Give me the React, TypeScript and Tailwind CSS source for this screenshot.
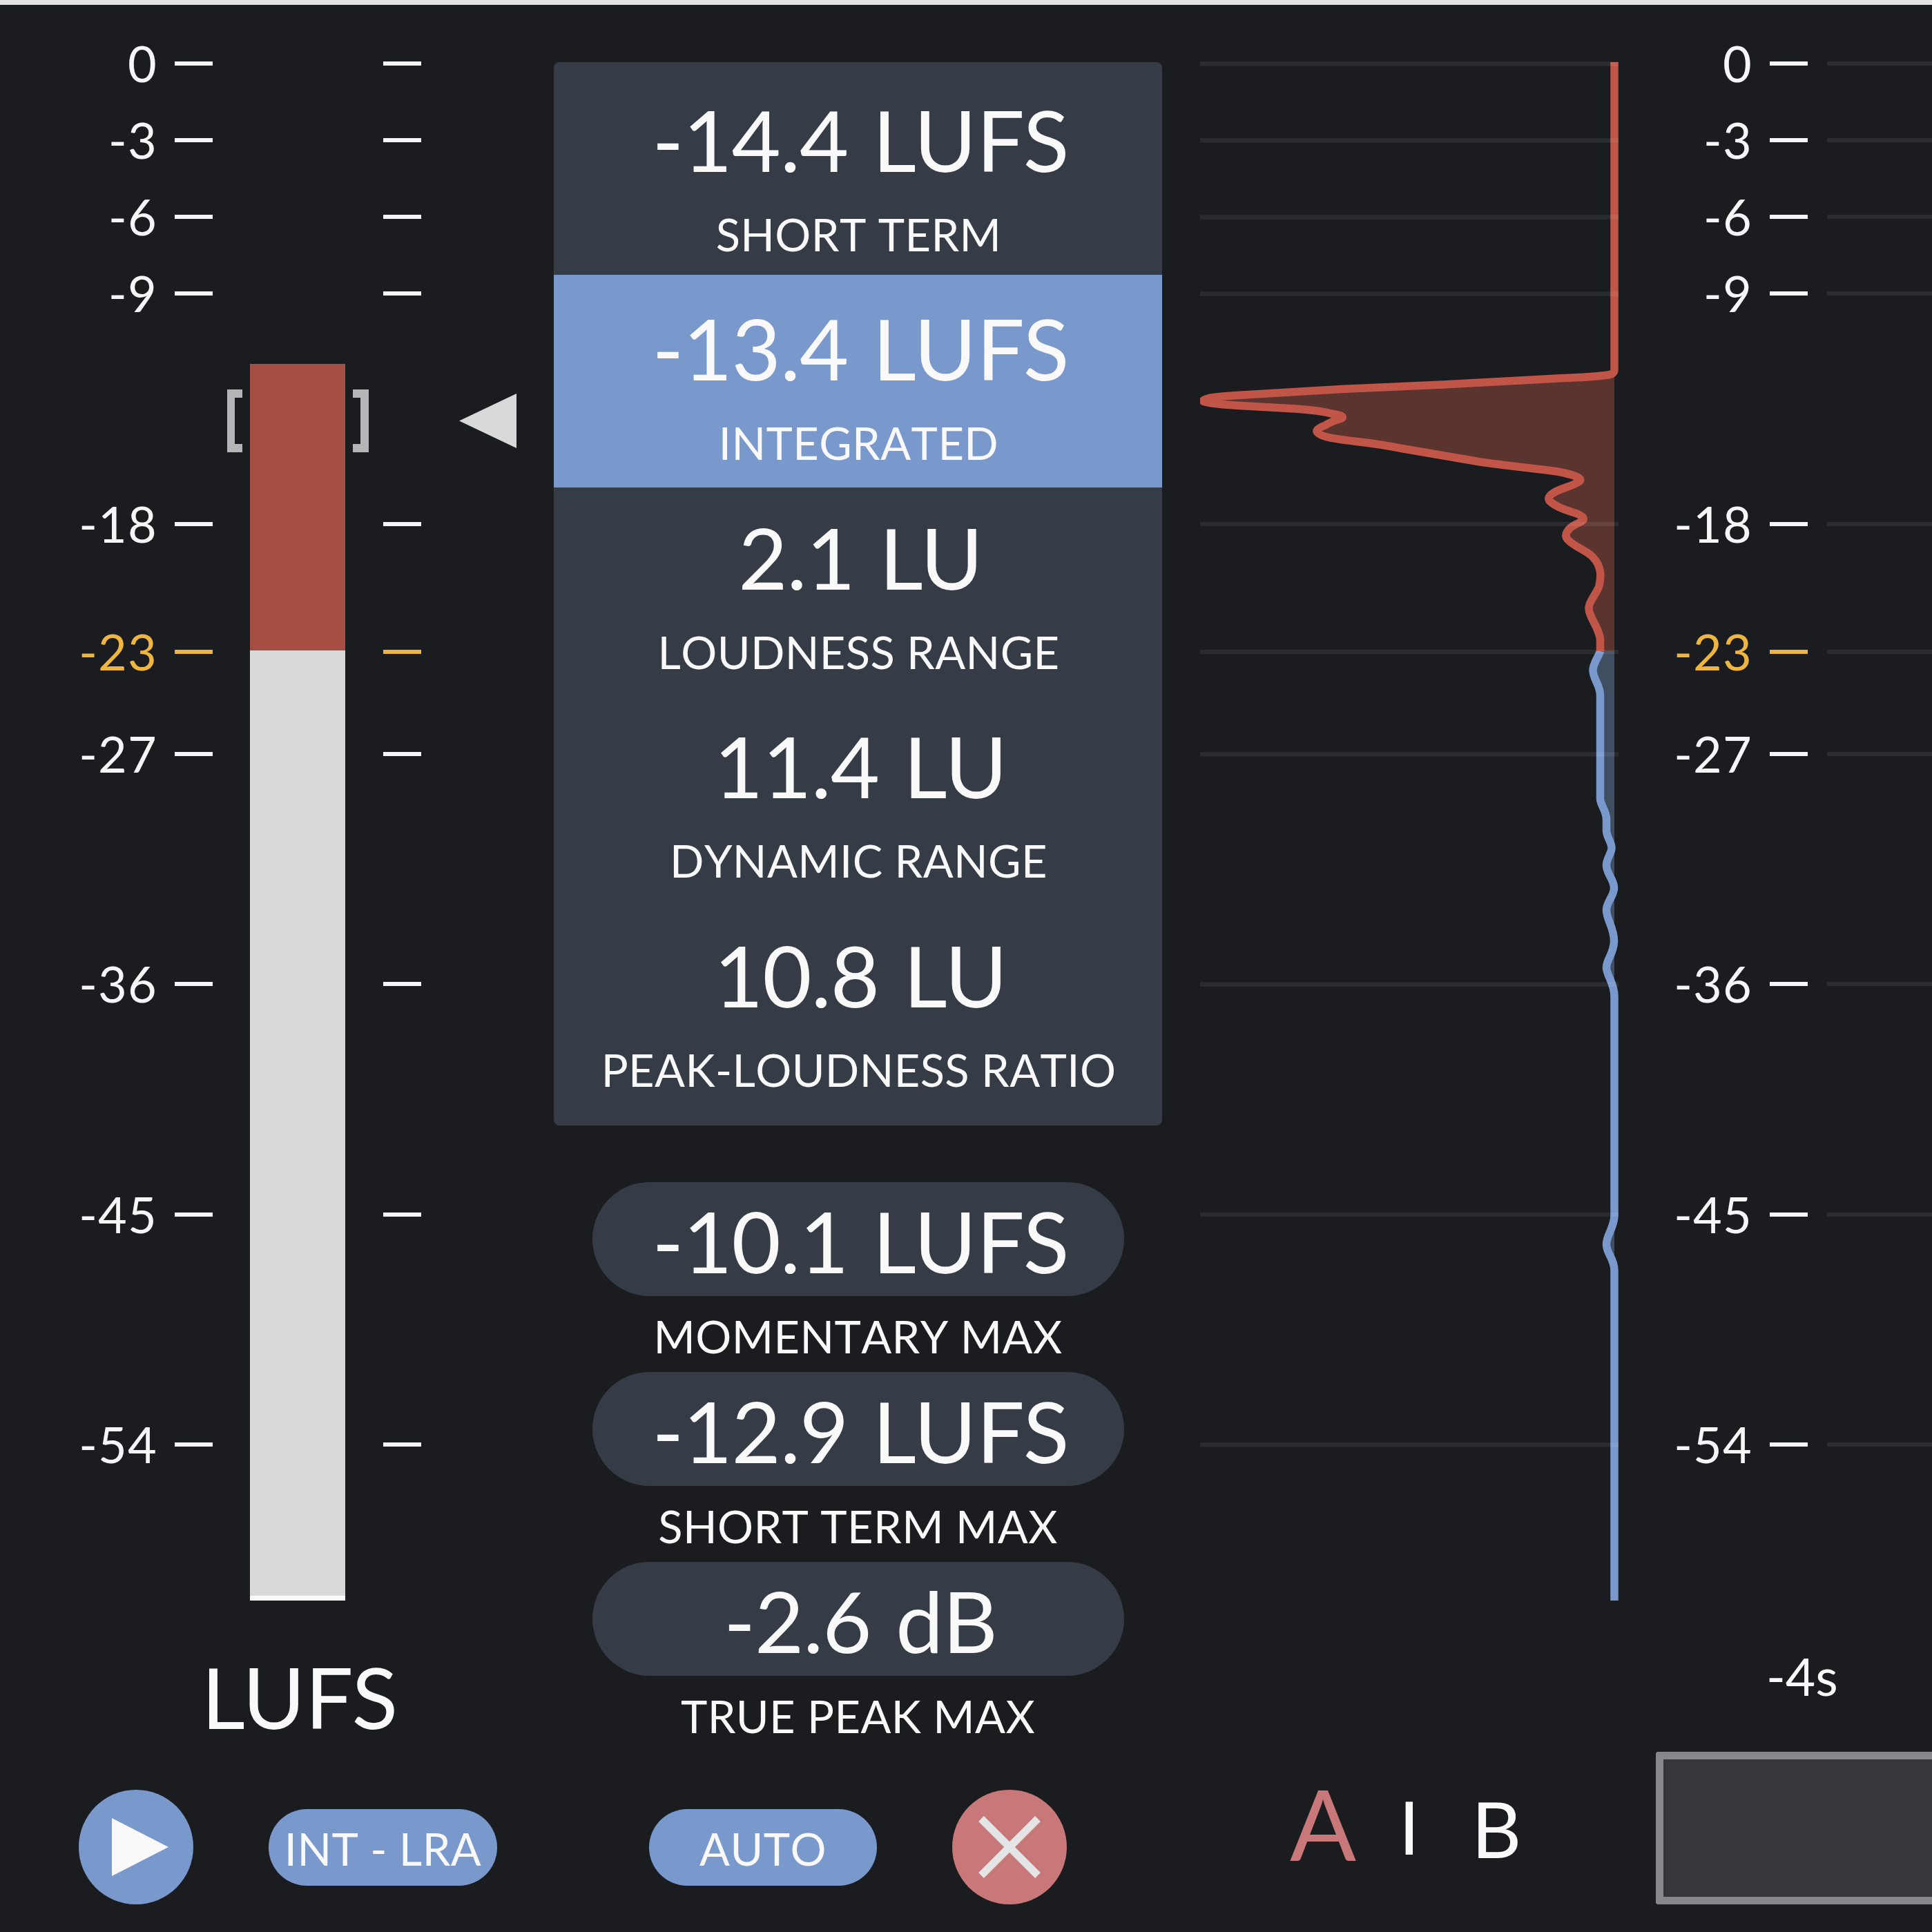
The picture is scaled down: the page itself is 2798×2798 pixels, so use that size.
const PX_PER_DB = 37.04;
const ROW = 72;

const marks = [0, -3, -6, -9, -18, -23, -27, -36, -45, -54];
const TARGET = -23;

const readings = [
  { value: "-14.4", unit: "LUFS", label: "SHORT TERM" },
  { value: "-13.4", unit: "LUFS", label: "INTEGRATED", active: true },
  { value: "2.1", unit: "LU", label: "LOUDNESS RANGE" },
  { value: "11.4", unit: "LU", label: "DYNAMIC RANGE" },
  { value: "10.8", unit: "LU", label: "PEAK-LOUDNESS RATIO" },
];

const maxima = [
  { value: "-10.1", unit: "LUFS", label: "MOMENTARY MAX" },
  { value: "-12.9", unit: "LUFS", label: "SHORT TERM MAX" },
  { value: "-2.6", unit: "dB", label: "TRUE PEAK MAX" },
];

// space above a row so that its middle lands on the mark's level
const rowGap = (i: number) =>
  i === 0 ? 0 : (marks[i - 1] - marks[i]) * PX_PER_DB - ROW;

function Scale({ labels = false }: { labels?: boolean }) {
  return (
    <div className="flex flex-col pt-[49px]">
      {marks.map((mark, i) => (
        <div
          key={mark}
          className={`flex h-[72px] shrink-0 items-center justify-end gap-[25px] ${
            mark === TARGET ? "text-[#eeb540]" : "text-[#f6f6f8]"
          }`}
          style={{ marginTop: rowGap(i) }}
        >
          {labels && (
            <span className="w-[140px] pb-[2px] text-right text-[72px] leading-[72px] tracking-[1.2px]">
              {mark}
            </span>
          )}
          <span className="h-[6px] w-[55px] bg-current" />
        </div>
      ))}
    </div>
  );
}

function GridLines() {
  return (
    <div className="flex flex-1 flex-col pt-[49px]">
      {marks.map((mark, i) => (
        <div
          key={mark}
          className="flex h-[72px] shrink-0 items-center"
          style={{ marginTop: rowGap(i) }}
        >
          <span className="h-[6px] w-full bg-white/[0.07]" />
        </div>
      ))}
    </div>
  );
}

function LevelMeter() {
  return (
    <div className="flex w-[802px] flex-col">
      <div className="flex h-[2311px]">
        <div className="w-[308px]">
          <Scale labels />
        </div>
        <div className="flex w-[247px] gap-[11px] pl-[21px]">
          <div className="mt-[557px] h-[91px] w-[22px] border-y-[12px] border-l-[11px] border-[#b4b5b7]" />
          <div className="mt-[520px] flex w-[138px] flex-col">
            <div className="h-[415px] bg-[#a54e44]" />
            <div className="flex-1 border-b-[7px] border-[#f9f9f9] bg-[#d9d9d9]" />
          </div>
          <div className="mt-[557px] h-[91px] w-[23px] border-y-[12px] border-r-[12px] border-[#b4b5b7]" />
        </div>
        <div className="w-[55px]">
          <Scale />
        </div>
        <svg className="mt-[563px] ml-[55px] h-[79px] w-[83px]" viewBox="0 0 83 79">
          <path d="M0 39.5 83 0v79z" fill="#d9d9d9" />
        </svg>
      </div>
      <div className="mt-[77px] pl-[66px] text-center text-[123px] leading-[123px]">LUFS</div>
    </div>
  );
}

function Value({ value, unit }: { value: string; unit: string }) {
  return (
    <div className="pl-[8px] text-[123px] leading-[123px] whitespace-pre [word-spacing:4px]">
      <span className="tracking-[-1px]">{value}</span> {unit}
    </div>
  );
}

function Label({ text }: { text: string }) {
  return (
    <div className="text-[65px] leading-[65px] tracking-[0.4px] [font-kerning:none]">{text}</div>
  );
}

function Readings() {
  return (
    <div className="w-[881px] pt-[83px]">
      <div className="overflow-hidden rounded-[8px] bg-[#363c46]">
        {readings.map((r, i) => (
          <div
            key={r.label}
            className={`flex h-[308px] flex-col items-center ${r.active ? "bg-[#7998cc]" : ""}`}
            style={{ paddingTop: 50 - i * 5.6 }}
          >
            <Value value={r.value} unit={r.unit} />
            <div className="mt-[44px] pl-[2px]">
              <Label text={r.label} />
            </div>
          </div>
        ))}
      </div>
      <div className="flex flex-col items-center pt-[82px]">
        {maxima.map((m) => (
          <div key={m.label} className="flex h-[275px] flex-col items-center">
            <div className="flex h-[165px] w-[770px] items-center justify-center rounded-full bg-[#363c46] pt-[4px]">
              <Value value={m.value} unit={m.unit} />
            </div>
            <div className="mt-[26px]">
              <Label text={m.label} />
            </div>
          </div>
        ))}
      </div>
    </div>
  );
}

// upper part is above the target level, lower part below it
const LOUD =
  "M600 83V528C600 533 597 535 591 536C570 539 545 540 518 541L352 550L205 556.500L71 564.500C45 566 20 567 12 570Q-3 574 12 576C22 578 35 579 49 580L138 585C165 587 180 589 190 592Q215 596 202 600Q193 602 181 609Q163 616 172 621C180 627 200 629 223 632C250 635 275 639 295 643L406 662C440 667 490 672 518 676Q563 685 546 692C540 696 525 700 517 704Q498 713 509 721C520 730 535 733 546 737Q563 744 549 750C531 758 526 768 533 775C542 785 560 790 569 800C583 815 580 830 578.500 839C577 850 563 863 563 873C562 885 579.500 905 579.500 920V936";
const QUIET =
  "M579.500 936C577 945 569 953 569 964C569 976 579.500 985 579.500 1000V1150C579.500 1158 588.500 1167 588.500 1180V1195C588.500 1206 596 1212 596 1221C596 1229 588.500 1236 588.500 1246C588.500 1259 599.500 1266 599.500 1279C599.500 1291 588.500 1299 588.500 1311C588.500 1325 599.500 1336 599.500 1356C599.500 1374 588.500 1382 588.500 1394C588.500 1406 600 1416 600 1436V1753C600 1771 588.500 1781 588.500 1795C588.500 1809 600 1815 600 1833V2311";

function Histogram() {
  return (
    <svg className="h-[2311px] w-[606px]" viewBox="0 0 606 2311" fill="none">
      <path d={`${LOUD}H600Z`} fill="#5b332f" />
      <path d={`${QUIET}V936Z`} fill="#404e62" />
      <path d={QUIET} stroke="#7998cc" strokeWidth="11.500" />
      <path d={LOUD} stroke="#c15548" strokeWidth="11.500" strokeLinejoin="round" />
      {marks.map((mark) => (
        <rect key={mark} y={82 - mark * PX_PER_DB} width="606" height="6.500" fill="#fff" fillOpacity=".07" />
      ))}
    </svg>
  );
}

function Transport() {
  return (
    <div className="flex h-[166px] items-center pl-[114px]">
      <button className="flex size-[166px] items-center justify-center rounded-full bg-[#7998cc] pl-[12px]">
        <svg className="h-[84px] w-[82px]" viewBox="0 0 82 84">
          <path d="M0 0 82 42 0 84z" fill="#f9f9f9" />
        </svg>
      </button>
      <button className="ml-[109px] h-[111px] w-[331px] rounded-full bg-[#7998cc] pt-[5px]">
        <Label text="INT - LRA" />
      </button>
      <button className="ml-[220px] h-[111px] w-[330px] rounded-full bg-[#7998cc] pt-[5px]">
        <Label text="AUTO" />
      </button>
      <button className="ml-[109px] flex size-[166px] items-center justify-center rounded-full bg-[#c87878]">
        <svg className="size-[90px]" viewBox="0 0 90 90">
          <path d="M4 4 86 86M86 4 4 86" stroke="#e3e5e6" strokeWidth="11" />
        </svg>
      </button>
    </div>
  );
}

export default function App() {
  return (
    <div className="flex h-[2798px] w-[2798px] flex-col overflow-hidden bg-[#1b1c20] font-['Lato',sans-serif] text-[#f9f9f9]">
      <div className="h-[7px] shrink-0 bg-[#e4e4e6]" />
      <div className="flex flex-1">
        <div className="flex w-[1683px] flex-col">
          <div className="flex h-[2585px]">
            <LevelMeter />
            <Readings />
          </div>
          <Transport />
        </div>

        <div className="ml-[55px] flex flex-1 flex-col">
          <div className="flex h-[2311px]">
            <Histogram />
            <div className="ml-[53px] w-[221px]">
              <Scale labels />
            </div>
            <div className="ml-[28px] flex flex-1">
              <GridLines />
            </div>
          </div>
          <div className="mt-[69px] h-[80px] pl-[820px] text-[75px] leading-[80px]">-4s</div>
          <div className="mt-[70px] flex h-[221px]">
            <div className="flex w-[660px] items-start pl-[130px] leading-none">
              <span className="w-[158px] pt-[32px] text-[142px] text-[#c87878]">A</span>
              <span className="w-[105px] pt-[55px] text-[106px]">I</span>
              <span className="pt-[55px] text-[112px]">B</span>
            </div>
            <div className="flex-1 rounded-l-[4px] border-y-[11px] border-l-[11px] border-[#87888b] bg-[#36373a]" />
          </div>
        </div>
      </div>
    </div>
  );
}
